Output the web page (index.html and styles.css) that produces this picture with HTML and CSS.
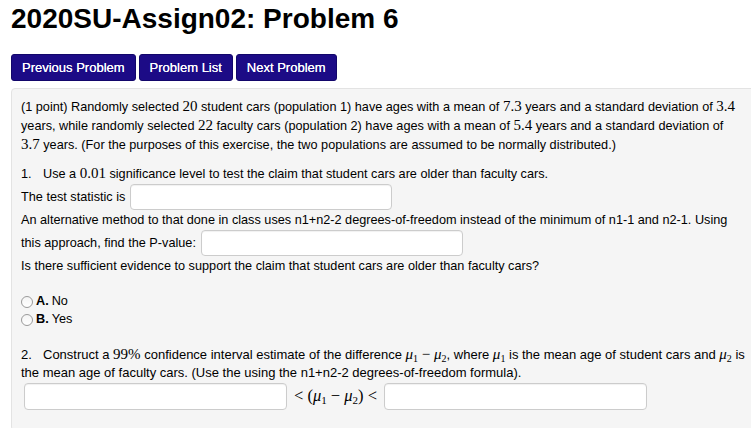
FILE: index.html
```html
<!DOCTYPE html>
<html lang="en">

<head>
    <meta charset="UTF-8">
    <meta name="viewport" content="width=device-width, initial-scale=1.0">
    <title>2020SU-Assign02: Problem 6</title>

    <link rel="stylesheet" href="styles.css">
</head>

<body>
    <h1 class="problem-title">2020SU-Assign02: Problem 6</h1>

    <div class="nav-buttons">
        <a class="nav-button" href="#">Previous Problem</a>
        <a class="nav-button" href="#">Problem List</a>
        <a class="nav-button" href="#">Next Problem</a>
    </div>

    <div class="problem-box">
        <p class="intro">
            (1 point) Randomly selected <span class="math">20</span> student cars (population 1) have ages with a mean of <span class="math">7.3</span> years and a standard deviation of <span class="math">3.4</span>
            years, while randomly selected <span class="math">22</span> faculty cars (population 2) have ages with a mean of <span class="math">5.4</span> years and a standard deviation of
            <span class="math">3.7</span> years. (For the purposes of this exercise, the two populations are assumed to be normally distributed.)
        </p>

        <div class="part">
            <div class="part-line"><span class="part-num">1.</span>Use a <span class="math">0.01</span> significance level to test the claim that student cars are older than faculty cars.</div>
            <div class="answer-line">The test statistic is <input class="answer" type="text"></div>
            <div class="text-line">An alternative method to that done in class uses n1+n2-2 degrees-of-freedom instead of the minimum of n1-1 and n2-1. Using</div>
            <div class="answer-line">this approach, find the P-value: <input class="answer" type="text"></div>
            <div class="text-line">Is there sufficient evidence to support the claim that student cars are older than faculty cars?</div>

            <div class="choices">
                <label class="choice"><input type="radio" name="q1"><b>A.</b> No</label>
                <label class="choice"><input type="radio" name="q1"><b>B.</b> Yes</label>
            </div>
        </div>

        <div class="part part-two">
            <div class="part-line"><span class="part-num">2.</span>Construct a <span class="math">99%</span> confidence interval estimate of the difference <span class="math"><i>&mu;</i><sub>1</sub> &minus; <i>&mu;</i><sub>2</sub></span>, where <span class="math"><i>&mu;</i><sub>1</sub></span> is the mean age of student cars and <span class="math"><i>&mu;</i><sub>2</sub></span> is
                the mean age of faculty cars. (Use the using the n1+n2-2 degrees-of-freedom formula).</div>
            <div class="interval">
                <input class="answer" type="text">
                <span class="math">&lt; (<i>&mu;</i><sub>1</sub> &minus; <i>&mu;</i><sub>2</sub>) &lt;</span>
                <input class="answer" type="text">
            </div>
        </div>
    </div>
</body>

</html>
```

FILE: styles.css
```css
html {
    overflow: hidden;
}

body {
    margin: 0;
    font-family: "Liberation Sans", Arial, sans-serif;
    font-size: 12.7px;
    color: #000;
    background-color: white;
}

.problem-title {
    font-size: 28px;
    font-weight: bold;
    margin: 0;
    padding: 3px 0 0 11px;
    line-height: 32px;
}

.nav-buttons {
    display: flex;
    gap: 3px;
    margin: 19px 0 0 11px;
}

.nav-button {
    display: inline-block;
    background-color: #1c0b86;
    border: 1px solid #12066a;
    border-radius: 3px;
    color: white;
    font-size: 13px;
    line-height: 25px;
    padding: 0 10px;
    text-decoration: none;
    text-shadow: 0 0 0.4px white;
}

.problem-box {
    width: 760px;
    margin: 7px 0 0 11px;
    padding: 8px 9px 20px;
    background-color: #f5f5f5;
    border: 1px solid #e3e3e3;
    border-radius: 4px;
    line-height: 18px;
}

.intro {
    margin: 0;
    width: 720px;
}

.math {
    font-family: "Liberation Serif", "Times New Roman", serif;
    font-size: 15px;
}

.math sub {
    font-size: 10px;
    vertical-align: -3px;
    line-height: 1;
}

.part {
    width: 728px;
    margin-top: 10px;
}

.part-two {
    font-size: 13px;
    margin-top: 17px;
}

.part-num {
    display: inline-block;
    width: 22px;
}

.answer-line {
    display: flex;
    align-items: center;
    gap: 5px;
    height: 26px;
    margin-top: 1px;
}

.text-line {
    margin-top: 1px;
}

.answer {
    width: 262px;
    height: 26px;
    box-sizing: border-box;
    border: 1px solid #cccccc;
    border-radius: 4px;
    background-color: white;
    box-shadow: inset 0 1px 1px rgba(0, 0, 0, 0.06);
    margin: 0;
}

.choices {
    margin-top: 17px;
    display: flex;
    flex-direction: column;
}

.choice {
    display: flex;
    align-items: center;
    gap: 3px;
    height: 18px;
}

.choice input {
    appearance: none;
    width: 12px;
    height: 12px;
    margin: 1px 0 0 0;
    border: 1px solid #9a9a9a;
    border-radius: 50%;
    background: linear-gradient(#f4f4f4, #ffffff);
}

.interval {
    display: flex;
    align-items: center;
    gap: 7px;
    margin: 1px 0 0 3px;
}

.interval .math {
    font-size: 16.5px;
}

.interval .math sub {
    font-size: 11px;
}

.interval .answer {
    width: 263px;
    height: 27px;
}
```
